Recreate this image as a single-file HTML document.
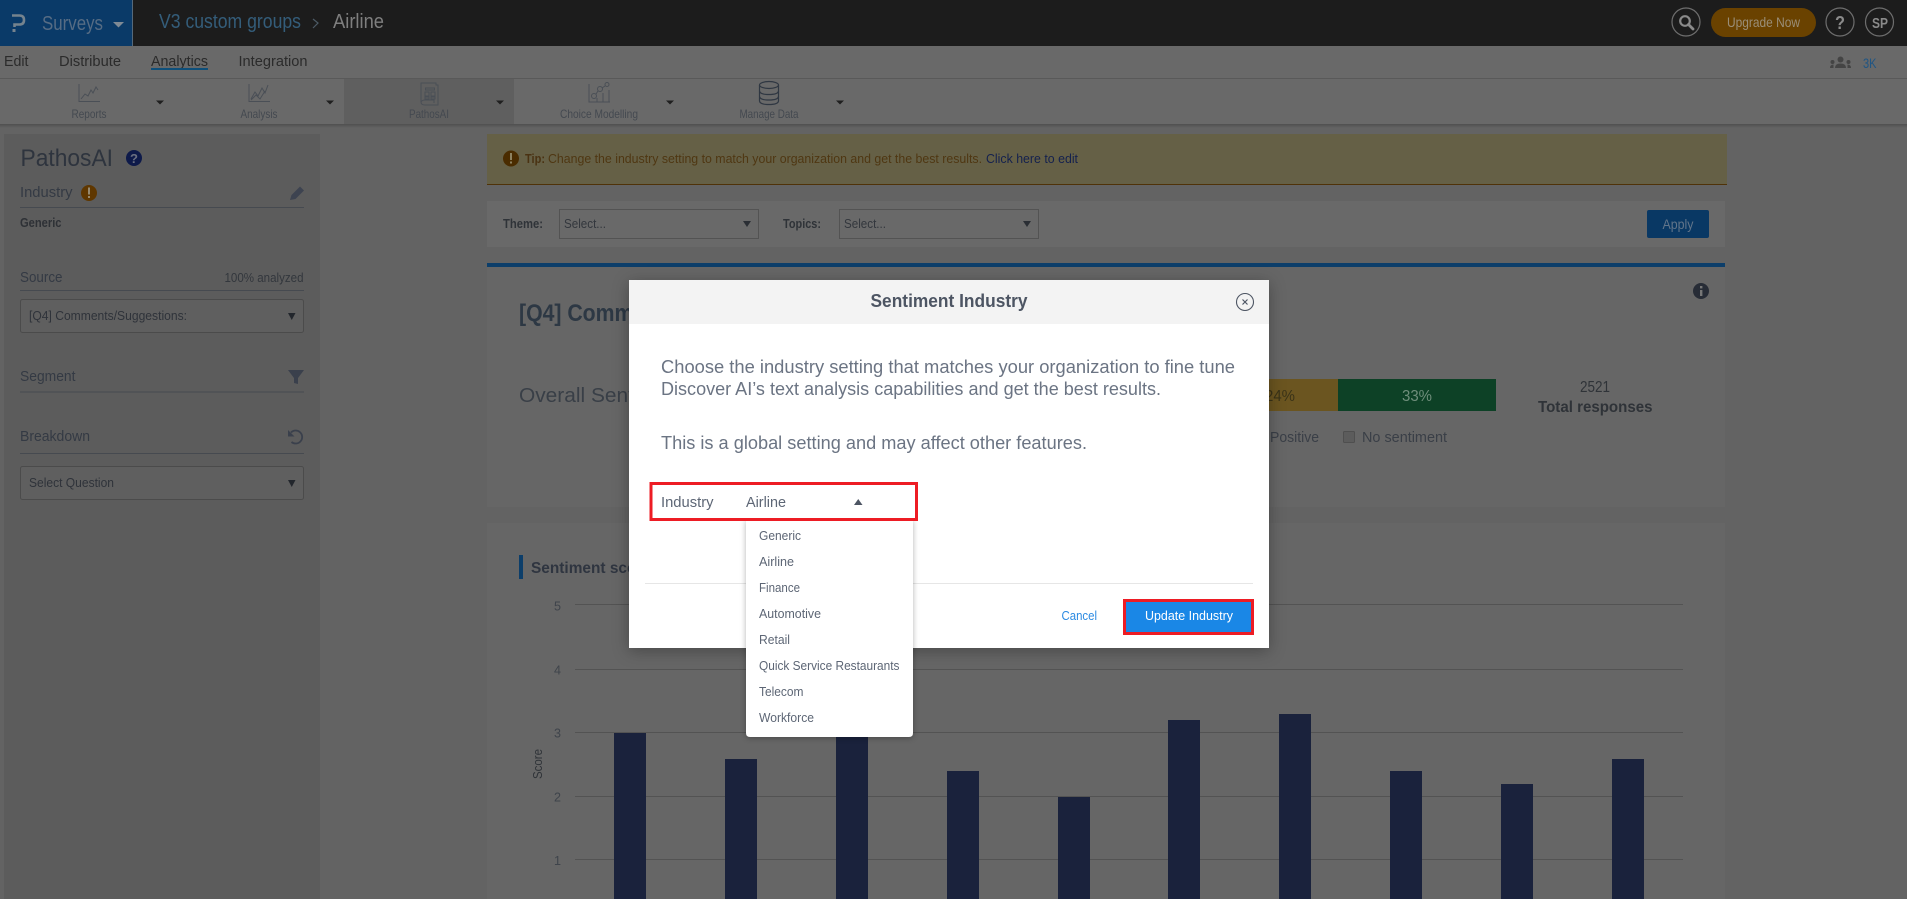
<!DOCTYPE html>
<html lang="en">
<head>
<meta charset="utf-8">
<title>PathosAI - Sentiment Industry</title>
<style>
html,body{margin:0;padding:0;width:1907px;height:899px;overflow:hidden;background:#636363}
svg{display:block}
text{font-family:"Liberation Sans",sans-serif;white-space:pre}
.modal{filter:drop-shadow(0 3px 8px rgba(0,0,0,.3))}
.dd{filter:drop-shadow(0 1px 3px rgba(0,0,0,.3))}
</style>
</head>
<body>
<svg xmlns="http://www.w3.org/2000/svg" width="1907" height="899" viewBox="0 0 1907 899">
<defs>
<linearGradient id="sh" x1="0" y1="0" x2="0" y2="1"><stop offset="0" stop-color="#4f4f4f"/><stop offset="1" stop-color="#636363"/></linearGradient>
</defs>

<!-- page bg -->
<rect width="1907" height="899" fill="#636363"/>

<!-- top bar -->
<rect width="1907" height="46" fill="#1c1c1c"/>
<rect width="132" height="46" fill="#0a3a68"/>
<rect x="132" width="1" height="46" fill="#55697a"/>
<path d="M12 15.500 H19.500 Q24 15.500 24 20 Q24 24.500 19.500 24.500 H14.500 V27" fill="none" stroke="#75838e" stroke-width="2.600"/>
<rect x="12.500" y="29" width="3" height="3" fill="#75838e"/>
<text x="42" y="30" font-size="20" fill="#566c84" textLength="61" lengthAdjust="spacingAndGlyphs">Surveys</text>
<path d="M113 22 H124 L118.500 27.500Z" fill="#7f8a95"/>
<text x="159" y="28" font-size="20" fill="#345d7a" textLength="142" lengthAdjust="spacingAndGlyphs">V3 custom groups</text>
<path d="M313 19 L318 23 L313 28" fill="none" stroke="#4d5b66" stroke-width="1.200"/>
<text x="333" y="28" font-size="20" fill="#7e7e7e" textLength="51" lengthAdjust="spacingAndGlyphs">Airline</text>

<circle cx="1686" cy="22" r="14" fill="none" stroke="#6e6e6e" stroke-width="1.200"/>
<circle cx="1685" cy="21" r="4.800" fill="none" stroke="#8a8a8a" stroke-width="2.200"/>
<path d="M1688.500 24.500 L1693 29" stroke="#8a8a8a" stroke-width="2.800" stroke-linecap="round"/>
<rect x="1711" y="8" width="105" height="29" rx="14.500" fill="#6a4200"/>
<text x="1727" y="27" font-size="14" fill="#9a8e78" textLength="73" lengthAdjust="spacingAndGlyphs">Upgrade Now</text>
<circle cx="1840" cy="22" r="14" fill="none" stroke="#6e6e6e" stroke-width="1.200"/>
<text x="1835" y="29" font-size="18" font-weight="bold" fill="#8a8a8a" textLength="10" lengthAdjust="spacingAndGlyphs">?</text>
<circle cx="1879.500" cy="22" r="14" fill="none" stroke="#6e6e6e" stroke-width="1.200"/>
<text x="1872" y="28" font-size="15" font-weight="bold" fill="#8a8a8a" textLength="16" lengthAdjust="spacingAndGlyphs">SP</text>

<!-- nav bar -->
<rect y="46" width="1907" height="32" fill="#696969"/>
<rect y="78" width="1907" height="1" fill="#595959"/>
<g font-size="15" fill="#2b2b2b">
<text x="4" y="66" textLength="24.500" lengthAdjust="spacingAndGlyphs">Edit</text>
<text x="59" y="66" textLength="62" lengthAdjust="spacingAndGlyphs">Distribute</text>
<text x="151" y="66" textLength="57" lengthAdjust="spacingAndGlyphs">Analytics</text>
<text x="238.500" y="66" textLength="69" lengthAdjust="spacingAndGlyphs">Integration</text>
</g>
<rect x="151" y="68" width="57" height="2" fill="#0e4f7a"/>
<g fill="#444444">
<circle cx="1840.500" cy="59.500" r="3"/><path d="M1835 68 Q1835 63.500 1840.500 63.500 Q1846 63.500 1846 68Z"/>
<circle cx="1832.500" cy="62" r="2"/><path d="M1830 68 Q1830 64.500 1833.500 64.500 L1833.500 68Z"/>
<circle cx="1848.500" cy="62" r="2"/><path d="M1851 68 Q1851 64.500 1847.500 64.500 L1847.500 68Z"/>
</g>
<text x="1863" y="68" font-size="14" fill="#1f5584" textLength="13.500" lengthAdjust="spacingAndGlyphs">3K</text>

<!-- ribbon -->
<rect y="79" width="1907" height="45" fill="#696969"/>
<rect x="344" y="79" width="170" height="45" fill="#5f5f5f"/>
<rect y="124" width="1907" height="4" fill="url(#sh)"/>
<g font-size="12" fill="#444950">
<text x="71.500" y="118" textLength="35" lengthAdjust="spacingAndGlyphs">Reports</text>
<text x="240.500" y="118" textLength="37" lengthAdjust="spacingAndGlyphs">Analysis</text>
<text x="409" y="118" textLength="40" lengthAdjust="spacingAndGlyphs">PathosAI</text>
<text x="560" y="118" textLength="78" lengthAdjust="spacingAndGlyphs">Choice Modelling</text>
<text x="739.500" y="118" textLength="59" lengthAdjust="spacingAndGlyphs">Manage Data</text>
</g>
<g fill="#1f1f1f">
<path d="M156 100.500 H164 L160 104.500Z"/><path d="M326 100.500 H334 L330 104.500Z"/><path d="M496 100.500 H504 L500 104.500Z"/><path d="M666 100.500 H674 L670 104.500Z"/><path d="M836 100.500 H844 L840 104.500Z"/>
</g>
<g fill="none" stroke="#4a4f56" stroke-width="1">
<path d="M79 84 V101.500 H100"/><path d="M81 99 L85 94 L88 96 L91 90 L93 93 L96 87 L98 90"/>
<path d="M249 84 V101.500 H270"/><path d="M251 99 L255 92 L258 96 L262 88 L265 93 L268 85"/><path d="M251 100 L256 95 L260 99 L265 91"/>
<path d="M421 83 H436 V85 H438 V105 H425 Q421 105 421 102Z"/><path d="M421 102 Q422 100 425 100 H434 V103"/>
<rect x="425.500" y="88" width="9" height="2"/><rect x="425" y="92" width="4" height="4"/><rect x="431" y="92" width="4" height="4"/><rect x="425" y="97" width="4" height="2"/><rect x="431" y="97" width="4" height="2"/>
<path d="M589 84 V102 H610"/><circle cx="594" cy="96" r="2.500"/><circle cx="600" cy="89" r="2.500"/><circle cx="607" cy="84.500" r="2"/><path d="M596 94 L598 91 M602 88 L605 86 M597 102 V98 M603 102 V93 M609 102 V90"/>
</g>
<g fill="none" stroke="#2f3742" stroke-width="1.200">
<ellipse cx="769" cy="85" rx="9.500" ry="3.500"/><path d="M759.500 85 V101 Q760 104.500 769 104.500 Q778 104.500 778.500 101 V85"/><path d="M759.500 91 Q760 94.500 769 94.500 Q778 94.500 778.500 91 M759.500 96.500 Q760 100 769 100 Q778 100 778.500 96.500"/>
</g>

<!-- sidebar -->
<rect x="4" y="134" width="316" height="765" fill="#5c5c5c"/>
<text x="20.500" y="166" font-size="24" fill="#2e343e" textLength="92.500" lengthAdjust="spacingAndGlyphs">PathosAI</text>
<circle cx="134" cy="158" r="8" fill="#0e1a4a"/>
<text x="130" y="163" font-size="13" font-weight="bold" fill="#6a6f80" textLength="8" lengthAdjust="spacingAndGlyphs">?</text>
<text x="20" y="197" font-size="15" fill="#343a44" textLength="52.500" lengthAdjust="spacingAndGlyphs">Industry</text>
<circle cx="89" cy="193" r="8" fill="#5f3700"/>
<rect x="88" y="187.500" width="2" height="7" fill="#96896f"/><rect x="88" y="196" width="2" height="2" fill="#96896f"/>
<path d="M290 200 L291.500 195 L300 186.500 L304 190.500 L295.500 199Z" fill="#3d4350"/>
<rect x="20" y="207" width="284" height="1" fill="#464a50"/>
<text x="20" y="227" font-size="13" font-weight="bold" fill="#2e3136" textLength="41.500" lengthAdjust="spacingAndGlyphs">Generic</text>

<text x="20" y="282" font-size="15" fill="#343a44" textLength="42.500" lengthAdjust="spacingAndGlyphs">Source</text>
<text x="224.500" y="282" font-size="13" fill="#33373d" textLength="79" lengthAdjust="spacingAndGlyphs">100% analyzed</text>
<rect x="20" y="290" width="284" height="1" fill="#464a50"/>
<rect x="20.500" y="299.500" width="283" height="33" rx="2" fill="#5f5f5f" stroke="#4b4b4b"/>
<text x="29" y="320" font-size="13" fill="#2f333a" textLength="158" lengthAdjust="spacingAndGlyphs">[Q4] Comments/Suggestions:</text>
<path d="M288 313 H295.500 L291.750 320Z" fill="#22262c"/>

<text x="20" y="381" font-size="15" fill="#343a44" textLength="55.500" lengthAdjust="spacingAndGlyphs">Segment</text>
<path d="M288 370 H304 L298 378 V384 L294 383 V378Z" fill="#3a404c"/>
<rect x="20" y="391.500" width="284" height="1" fill="#464a50"/>

<text x="20" y="441" font-size="15" fill="#343a44" textLength="70" lengthAdjust="spacingAndGlyphs">Breakdown</text>
<path d="M291 432.500 A6.500 6.500 0 1 1 291.500 442" fill="none" stroke="#3a404c" stroke-width="1.800"/>
<path d="M288 430 V436.500 H294.500Z" fill="#3a404c"/>
<rect x="20" y="453" width="284" height="1" fill="#464a50"/>
<rect x="20.500" y="466.500" width="283" height="33" rx="2" fill="#5f5f5f" stroke="#4b4b4b"/>
<text x="29" y="487" font-size="13" fill="#2f333a" textLength="85" lengthAdjust="spacingAndGlyphs">Select Question</text>
<path d="M288 480 H295.500 L291.750 487Z" fill="#22262c"/>

<!-- tip -->
<rect x="487" y="134" width="1240" height="50" fill="#656046"/>
<rect x="487" y="184" width="1240" height="1" fill="#4f3208"/>
<circle cx="511" cy="158.500" r="8" fill="#4a2c00"/>
<rect x="510" y="153" width="2" height="7" fill="#8d8260"/><rect x="510" y="161.500" width="2" height="2" fill="#8d8260"/>
<text x="525" y="163" font-size="13" font-weight="bold" fill="#4a3212" textLength="20" lengthAdjust="spacingAndGlyphs">Tip:</text>
<text x="548" y="163" font-size="13" fill="#4f3712" textLength="434" lengthAdjust="spacingAndGlyphs">Change the industry setting to match your organization and get the best results.</text>
<text x="986" y="163" font-size="13" fill="#14214e" textLength="92" lengthAdjust="spacingAndGlyphs">Click here to edit</text>

<!-- filter bar -->
<rect x="487" y="201" width="1238" height="46" fill="#696969"/>
<text x="503" y="228" font-size="13" font-weight="bold" fill="#2f3338" textLength="40" lengthAdjust="spacingAndGlyphs">Theme:</text>
<rect x="559.500" y="209.500" width="199" height="29" fill="#696969" stroke="#535353"/>
<text x="564" y="228" font-size="13" fill="#33373d" textLength="42" lengthAdjust="spacingAndGlyphs">Select...</text>
<path d="M743 221 H751 L747 227Z" fill="#2a2e34"/>
<text x="783" y="228" font-size="13" font-weight="bold" fill="#2f3338" textLength="38" lengthAdjust="spacingAndGlyphs">Topics:</text>
<rect x="839.500" y="209.500" width="199" height="29" fill="#696969" stroke="#535353"/>
<text x="844" y="228" font-size="13" fill="#33373d" textLength="42" lengthAdjust="spacingAndGlyphs">Select...</text>
<path d="M1023 221 H1031 L1027 227Z" fill="#2a2e34"/>
<rect x="1647" y="210" width="62" height="28" rx="2" fill="#093864"/>
<text x="1662.500" y="229" font-size="14" fill="#62758a" textLength="31" lengthAdjust="spacingAndGlyphs">Apply</text>

<!-- card 1 -->
<rect x="487" y="263" width="1238" height="244" fill="#666666"/>
<rect x="487" y="263" width="1238" height="4" fill="#0c3e6a"/>
<circle cx="1701" cy="291" r="8" fill="#272c36"/>
<rect x="1700" y="290" width="2.400" height="6" fill="#777"/><rect x="1700" y="286" width="2.400" height="2.400" fill="#777"/>
<text x="519" y="321" font-size="24" font-weight="bold" fill="#2d3844" textLength="158" lengthAdjust="spacingAndGlyphs">[Q4] Comments</text>
<text x="519" y="402" font-size="20" fill="#393f47" textLength="166" lengthAdjust="spacingAndGlyphs">Overall Sentiment</text>
<rect x="1240" y="379" width="98" height="32" fill="#6b5520"/>
<rect x="1338" y="379" width="158" height="32" fill="#0d4126"/>
<text x="1265" y="401" font-size="16" fill="#3a3318" textLength="30" lengthAdjust="spacingAndGlyphs">24%</text>
<text x="1402" y="401" font-size="16" fill="#6f8e7b" textLength="30" lengthAdjust="spacingAndGlyphs">33%</text>
<text x="1580" y="392" font-size="16" fill="#2f3338" textLength="30" lengthAdjust="spacingAndGlyphs">2521</text>
<text x="1538" y="412" font-size="16" font-weight="bold" fill="#2f3338" textLength="114.500" lengthAdjust="spacingAndGlyphs">Total responses</text>
<text x="1270" y="442" font-size="15" fill="#3a3f47" textLength="49" lengthAdjust="spacingAndGlyphs">Positive</text>
<rect x="1343.500" y="431.500" width="11" height="11" rx="1" fill="#5c5c5c" stroke="#4f4f4f"/>
<text x="1362" y="442" font-size="15" fill="#3a3f47" textLength="85" lengthAdjust="spacingAndGlyphs">No sentiment</text>

<!-- card 2 -->
<rect x="487" y="523" width="1238" height="376" fill="#666666"/>
<rect x="519" y="555" width="4" height="24" fill="#0c3e6a"/>
<text x="531" y="573" font-size="16" font-weight="bold" fill="#2f3540" textLength="120" lengthAdjust="spacingAndGlyphs">Sentiment score</text>
<g fill="#535353">
<rect x="575" y="604" width="1108" height="1"/>
<rect x="575" y="669" width="1108" height="1"/>
<rect x="575" y="732" width="1108" height="1"/>
<rect x="575" y="796" width="1108" height="1"/>
<rect x="575" y="859" width="1108" height="1"/>
</g>
<g font-size="13" fill="#3f444b">
<text x="554" y="610.500" textLength="7" lengthAdjust="spacingAndGlyphs">5</text>
<text x="554" y="674.500" textLength="7" lengthAdjust="spacingAndGlyphs">4</text>
<text x="554" y="737.500" textLength="7" lengthAdjust="spacingAndGlyphs">3</text>
<text x="554" y="801.500" textLength="7" lengthAdjust="spacingAndGlyphs">2</text>
<text x="554" y="865" textLength="7" lengthAdjust="spacingAndGlyphs">1</text>
<text transform="translate(542,779) rotate(-90)" fill="#2f3338" textLength="30" lengthAdjust="spacingAndGlyphs">Score</text>
</g>
<g fill="#1a223c">
<rect x="614" y="733" width="32" height="166"/>
<rect x="725" y="759" width="32" height="140"/>
<rect x="836" y="700" width="32" height="199"/>
<rect x="947" y="771" width="32" height="128"/>
<rect x="1058" y="797" width="32" height="102"/>
<rect x="1168" y="720" width="32" height="179"/>
<rect x="1279" y="714" width="32" height="185"/>
<rect x="1390" y="771" width="32" height="128"/>
<rect x="1501" y="784" width="32" height="115"/>
<rect x="1612" y="759" width="32" height="140"/>
</g>

<!-- modal -->
<g class="modal">
<rect x="629" y="280" width="640" height="368" fill="#ffffff"/>
</g>
<rect x="629" y="280" width="640" height="44" fill="#f3f3f3"/>
<text x="870.500" y="307" font-size="18" font-weight="bold" fill="#4d5563" textLength="157" lengthAdjust="spacingAndGlyphs">Sentiment Industry</text>
<circle cx="1245" cy="302" r="8.500" fill="none" stroke="#4d5563" stroke-width="1.100"/>
<path d="M1242.500 299.500 L1247.500 304.500 M1247.500 299.500 L1242.500 304.500" stroke="#4d5563" stroke-width="1.200"/>
<g font-size="18" fill="#6b7483">
<text x="661" y="373" textLength="574" lengthAdjust="spacingAndGlyphs">Choose the industry setting that matches your organization to fine tune</text>
<text x="661" y="395" textLength="500" lengthAdjust="spacingAndGlyphs">Discover AI’s text analysis capabilities and get the best results.</text>
<text x="661" y="449" textLength="426" lengthAdjust="spacingAndGlyphs">This is a global setting and may affect other features.</text>
</g>
<rect x="645" y="583" width="608" height="1" fill="#e6e6e6"/>
<text x="1061.500" y="620" font-size="13" fill="#2b8ae2" textLength="35.500" lengthAdjust="spacingAndGlyphs">Cancel</text>
<rect x="1124.500" y="600.500" width="128" height="33" fill="#1a87e6" stroke="#ed1c24" stroke-width="3"/>
<text x="1145" y="620" font-size="13" fill="#ffffff" textLength="88" lengthAdjust="spacingAndGlyphs">Update Industry</text>

<!-- dropdown -->
<g class="dd"><path d="M746 520 H913 V733 Q913 737 909 737 H750 Q746 737 746 733Z" fill="#ffffff"/></g>
<g font-size="13" fill="#5d6675">
<text x="759" y="540" textLength="42" lengthAdjust="spacingAndGlyphs">Generic</text>
<text x="759" y="566" textLength="35" lengthAdjust="spacingAndGlyphs">Airline</text>
<text x="759" y="592" textLength="41" lengthAdjust="spacingAndGlyphs">Finance</text>
<text x="759" y="618" textLength="62" lengthAdjust="spacingAndGlyphs">Automotive</text>
<text x="759" y="644" textLength="31" lengthAdjust="spacingAndGlyphs">Retail</text>
<text x="759" y="670" textLength="140.500" lengthAdjust="spacingAndGlyphs">Quick Service Restaurants</text>
<text x="759" y="696" textLength="44.500" lengthAdjust="spacingAndGlyphs">Telecom</text>
<text x="759" y="722" textLength="55" lengthAdjust="spacingAndGlyphs">Workforce</text>
</g>

<!-- industry select -->
<rect x="651" y="483.500" width="265.500" height="36" fill="#ffffff" stroke="#ed1c24" stroke-width="3"/>
<text x="661" y="507" font-size="14.500" fill="#5d6675" textLength="52.500" lengthAdjust="spacingAndGlyphs">Industry</text>
<text x="746" y="507" font-size="14.500" fill="#5d6675" textLength="40" lengthAdjust="spacingAndGlyphs">Airline</text>
<path d="M854 505 H862.500 L858.250 499Z" fill="#4d5563"/>
</svg>
</body>
</html>
